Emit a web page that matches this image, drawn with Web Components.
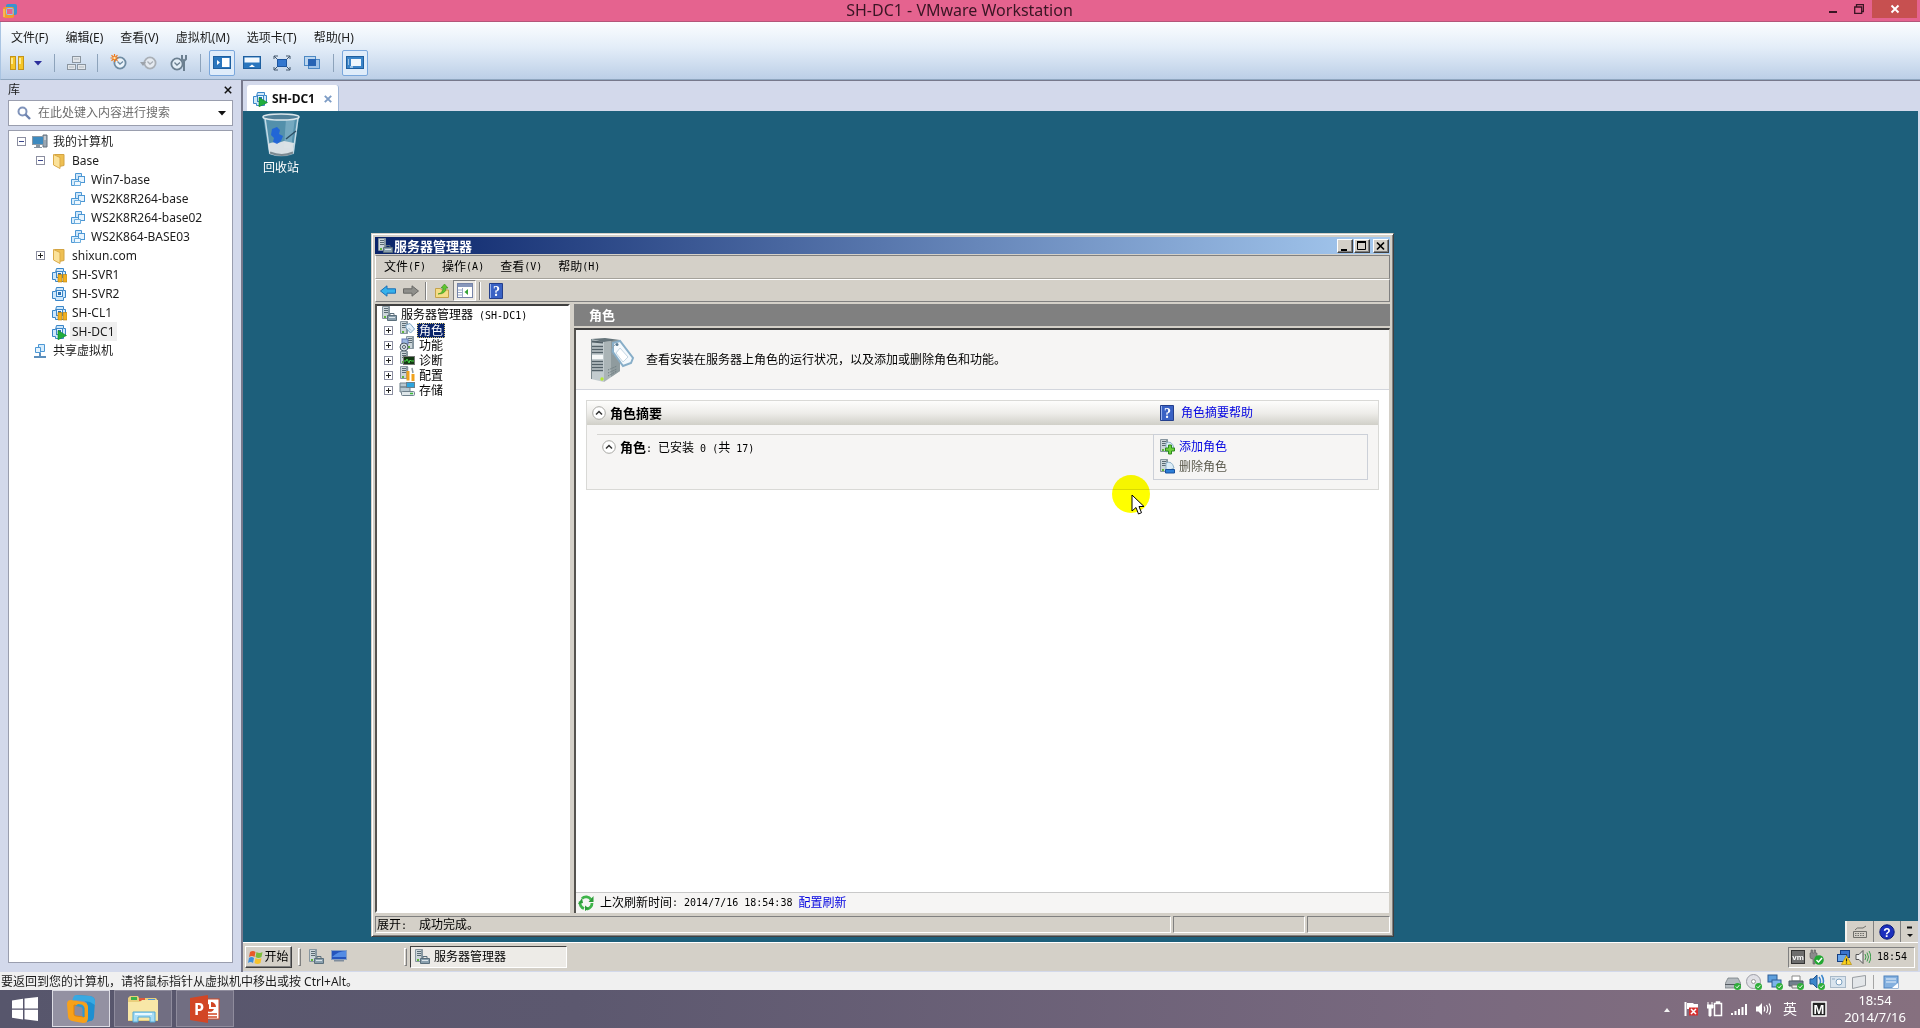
<!DOCTYPE html>
<html lang="zh-CN">
<head>
<meta charset="utf-8">
<title>SH-DC1 - VMware Workstation</title>
<style>
html,body{height:100%;margin:0}
body{font:12px/16px "Noto Sans","Noto Sans CJK SC",sans-serif;color:#1c1c1c;overflow:hidden}
</style>
</head>
<body>
<vm-app></vm-app>
<script>
const BASE = `*{box-sizing:border-box}
button{font:inherit;color:inherit;background:none;border:0;padding:0;margin:0;display:flex;align-items:center;justify-content:center;white-space:nowrap}
a{text-decoration:none;color:#0000e0}`;

function define(name, css, html, setup) {
  const t = document.createElement('template');
  t.innerHTML = `<style>${BASE}${css}</style>${html}`;
  customElements.define(name, class extends HTMLElement {
    constructor() {
      super();
      this.attachShadow({mode: 'open'}).append(t.content.cloneNode(true));
    }
    connectedCallback() { if (setup) setup(this, this.shadowRoot); }
  });
}

/* ---------- icons ---------- */
const tower = `<path d="M2 0h6l1 1v11l-1 1H2z" fill="#8b9ba3"/><path d="M2 0h5v13H2z" fill="#cdd6da"/><path d="M3 2.500h4M3 4.500h4M3 6.500h4" stroke="#5a6b74"/><path d="M1.500 .5h7v12h-7z" fill="none" stroke="#8796a0"/><path d="M3 10h2v2H3z" fill="#5fb43c"/>`;
const blueBox = `<path d="M5.500 1.500h7v3h2v7h-2v3h-8v-2h-3v-7h3z" fill="#cfe8fb" stroke="#3a86c8"/><rect x="5.500" y="4.500" width="6" height="6" fill="#eaf6ff" stroke="#3a86c8"/><rect x="7.500" y="6.500" width="2" height="2" fill="#3a86c8" stroke="#2a6fb0"/>`;
const okDot = `<circle cx="12.500" cy="12.500" r="3.500" fill="#2fae3a"/><path d="M10.800 12.500l1.300 1.300 2.200-2.600" fill="none" stroke="#fff"/>`;
const clock = (c, f) => `<circle cx="10" cy="9" r="5.600" fill="${f}" stroke="${c}" stroke-width="1.800"/><path d="M7.500 7.500L10 10l3-2.500" fill="none" stroke="${c}" stroke-width="1.300"/>`;
const ICONS = {
  logo:[16,16,`<rect x="4" y="1" width="11" height="11" rx="2" fill="#3b93cf"/><rect x="1" y="4" width="11" height="11" rx="2" fill="#f29a2e"/><rect x="4.500" y="5.500" width="6.500" height="6" rx="1" fill="#e5638f" stroke="#8fc8ec"/><path d="M2 14V6" stroke="#ffd37a"/>`],
  logobig:[30,30,`<path d="M10 1l14 1q5 1 5 5l-1 15q0 5-4 5l-3 1V9z" fill="#1e8fd0"/><path d="M10 1l14 1q5 1 5 5v4l-5-3-14-2-4 2 1-4q1-3 3-3z" fill="#39a9e2"/><path d="M5 6l12 2q5 1 5 5v11q0 5-5 5L6 27q-4-1-4-5L1 10q0-4 4-4z" fill="#f7a11a"/><path d="M8 11l8 1.500q2 .5 2 2V23l-8-1q-2 0-2-2z" fill="#8d8b9e" stroke="#e28309"/><path d="M12 10q4 0 5 1.500 1.500 1 1.500 3V23l-2-.3V15q0-2-2-2l-5-1z" fill="#2a99d6"/>`],
  pause:[16,16,`<rect x="1.500" y="1.500" width="5" height="13" fill="#f5c628" stroke="#c3941a"/><rect x="9.500" y="1.500" width="5" height="13" fill="#f5c628" stroke="#c3941a"/><path d="M3 3v6M11 3v6" stroke="#fdeb92" stroke-width="2"/>`],
  caret:[8,5,`<path d="M0 0h8L4 4.500z" fill="#2b2f9c"/>`],
  net:[20,16,`<g fill="#e2e6ea" stroke="#8b959f"><rect x="6.500" y="1.500" width="8" height="6"/><rect x="1.500" y="9.500" width="8" height="5"/><rect x="11.500" y="9.500" width="8" height="5"/></g><path d="M8 4h5M3 12h5M13 12h5" stroke="#b2bac1"/>`],
  snapnew:[18,18,clock('#6f8ca3','#eaf3fa')+`<path d="M4.500 0v8M.5 4h8M1.500 1.200l6 5.600M7.500 1.200l-6 5.600" stroke="#ef7a1d" stroke-width="1.200"/><circle cx="4.500" cy="4" r="1.200" fill="#ffe9b0"/>`],
  snapback:[18,18,clock('#a9afb6','#e5eaf0')+`<path d="M0 8h6L3 12z" fill="#9da3aa"/>`],
  snapman:[18,18,`<g transform="translate(-3 1)">${clock('#6b7f90','#e3eef7')}</g><path d="M12 1v4l2 2 2-2V1M14 7v10" fill="none" stroke="#6b7f90" stroke-width="2"/>`],
  view1:[18,14,`<rect x=".5" y=".5" width="17" height="12" fill="#2a76be" stroke="#1e5f9f"/><rect x="9" y="2" width="7.500" height="9" fill="#fff"/><path d="M4 4l3 2.500L4 9z" fill="#fff"/>`],
  view2:[18,14,`<rect x=".5" y=".5" width="17" height="12" fill="#2a76be" stroke="#1e5f9f"/><rect x="1.500" y="1.500" width="15" height="5" fill="#f4f9fd"/><path d="M6 11h6L9 8.500z" fill="#fff"/>`],
  full:[18,16,`<path d="M1 4V1h4M13 1h4v3M17 12v3h-4M5 15H1v-3M1 1l3 3M17 1l-3 3M17 15l-3-3M1 15l3-3" fill="none" stroke="#42566c"/><rect x="4.500" y="4.500" width="9" height="7" fill="#3377cf" stroke="#1d559f"/>`],
  unity:[18,16,`<rect x="1.500" y="1.500" width="11" height="9" fill="#bcd6ef" stroke="#4d89c4"/><rect x="5.500" y="4.500" width="11" height="9" fill="#9fc3e8" stroke="#4d89c4"/><rect x="5" y="4" width="8" height="7" fill="#2764b4"/>`],
  console:[18,14,`<rect x=".5" y=".5" width="17" height="12" fill="#3b84c8" stroke="#1e5f9f"/><rect x="5" y="3" width="10" height="7" fill="#f1f7fc"/><path d="M2 4h1M2 6h1M2 8h1M4 11h3" stroke="#fff"/>`],
  search:[14,14,`<circle cx="5.500" cy="5.500" r="4" fill="none" stroke="#7f93ba" stroke-width="2"/><path d="M8.500 8.500L13 13" stroke="#6d82ae" stroke-width="2.400"/>`],
  x:[8,8,`<path d="M.8 .8l6.400 6.400M7.200 .8L.8 7.200" stroke="#111" stroke-width="1.500"/>`],
  xblue:[8,8,`<path d="M.8 .8l6.400 6.400M7.200 .8L.8 7.200" stroke="#7d9cc5" stroke-width="1.900"/>`],
  down:[8,5,`<path d="M0 0h8L4 4.500z" fill="#111"/>`],
  pc:[16,16,`<path d="M11 1h4v12h-4z" fill="#9aa7b3" stroke="#65717d"/><rect x=".5" y="2.500" width="11" height="8" fill="#3d8abf" stroke="#8b99a5"/><path d="M4 11h4v2h2v1H2v-1h2z" fill="#8794a0"/><path d="M12 3h2M12 5h2" stroke="#eee"/>`],
  folder:[14,16,`<path d="M2.500 1.500h9.500v11l-5 1z" fill="#eebf52" stroke="#d3a443"/><path d="M1.500 1.500L8 4.500v11L1.500 12z" fill="#fbe29a" stroke="#dbab49"/>`],
  clone:[14,14,`<path d="M4.500 .5h6v3h3v6h-9z" fill="#cde6fa" stroke="#4c97d4"/><rect x="7.500" y="3.500" width="6" height="6" fill="#e7f4fe" stroke="#4c97d4"/><path d="M.5 6.500h7v6h-7z" fill="#d8edfc" stroke="#4c97d4"/><path d="M3.500 8.500h6v4h-6z" fill="#eef8ff" stroke="#6badde"/>`],
  vm:[16,16,blueBox],
  vmpause:[16,16,blueBox+`<path d="M7 7.500h4V15H7zM12 7.500h4V15h-4z" fill="#f1b01f" stroke="#b9800e" stroke-width=".6"/>`],
  vmrun:[16,16,blueBox+`<path d="M7 6.500l8.500 5L7 15.800z" fill="#1fae3c" stroke="#12852a" stroke-width=".6"/>`],
  shared:[14,16,`<path d="M5.500 1.500h6v7h-6z" fill="#d6ecfc" stroke="#4c97d4"/><path d="M2.500 4.500h5v5h-5z" fill="#e6f4fe" stroke="#4c97d4"/><path d="M7 10v3M1 14h12" stroke="#5b8fbd" stroke-width="2"/>`],
  minus:[9,9,`<rect x=".5" y=".5" width="8" height="8" fill="#fff" stroke="#8b8ea0"/><path d="M2 4.500h5" stroke="#39458c"/>`],
  plus:[9,9,`<rect x=".5" y=".5" width="8" height="8" fill="#fff" stroke="#8b8ea0"/><path d="M2 4.500h5M4.500 2v5" stroke="#222"/>`],
  bin:[38,44,`<path d="M1 3h36l-5 38q-13 5-25 0z" fill="#78b0cc" fill-opacity=".6"/><path d="M3 5l5 36M36 5l-5 36" stroke="#c3dbe6" stroke-width="1.500"/><path d="M24 5h9l-4 30h-7z" fill="#a9d0e2" fill-opacity=".4"/><path d="M6 31q5-3 10-1l6-2 10 2-1.500 11q-12 4-23 0z" fill="#dfe5e8" fill-opacity=".95"/><path d="M8 39.500q12 5 23 0" stroke="#7c8a92" fill="none" stroke-width="2"/><path d="M10 16l5-2 3 3-1 4 4 2-2 5-4 3-4-2 1-4-3-3z" fill="#1a5fdd" fill-opacity=".85"/><path d="M24 26l10-8" stroke="#2d4f64" stroke-width="1.500"/><ellipse cx="19" cy="4" rx="18" ry="3" fill="#4f7f98" stroke="#dbe7ec" stroke-width="1.500"/>`],
  server:[16,16,tower+`<path d="M6.500 9.500h9v5h-9z" fill="#8aa0ae" stroke="#5b6f7c"/><path d="M9 9V7.500h4V9" fill="none" stroke="#5b6f7c"/><path d="M8 11.500h6" stroke="#dbe4e9"/>`],
  roles:[16,16,tower+`<path d="M7 4l4-1.500 4.500 5.500-4 4L7 7z" fill="#e4f0f9" stroke="#7ba4c4"/><path d="M9.500 7l2.500 2.500" stroke="#9bb6cb"/>`],
  features:[16,16,`<g transform="translate(6 0)">${tower}</g><rect x="3" y="3" width="6" height="5" fill="#9ab7df" stroke="#667bb8"/><circle cx="5" cy="11" r="4" fill="#d5dfe6" stroke="#4b5b67"/><circle cx="5" cy="11" r="1.500" fill="#fff" stroke="#4b5b67"/>`],
  diag:[16,16,tower+`<rect x="4.500" y="5.500" width="11" height="8" fill="#143a14" stroke="#777"/><path d="M5 10h2l1-2 2 4 1-3 1 1h3" fill="none" stroke="#45d945"/>`],
  config:[16,16,tower+`<path d="M9 5v9.500M14 8v7" stroke="#f0a21c" stroke-width="3"/><path d="M8.500 5V1M14 7l-1-5" stroke="#8a979f" stroke-width="1.500"/>`],
  storage:[16,16,`<path d="M1 2h8v4H1zM1 6h10v5H1z" fill="#b9c8d0" stroke="#70828d"/><rect x="7.500" y="1.500" width="8" height="5" fill="#2fa5dd" stroke="#69808e"/><rect x="2.500" y="10.500" width="13" height="4" rx="1" fill="#dfe7ea" stroke="#6f818c"/><path d="M11 12.500h3" stroke="#3dbb3d" stroke-width="1.500"/>`],
  bigserver:[46,46,`<path d="M15 5l16-2v31L15 45z" fill="#aab4b6"/><path d="M22 4l9-1v31l-9 6z" fill="#8f9b9e"/><path d="M2 2h13v43L2 42z" fill="#c3cccf"/><path d="M2 2l14-1 15 2-16 2z" fill="#66757b"/><path d="M2.500 2v40" stroke="#7b888d"/><path d="M3 9.500h11M3 12.500h11M3 15.500h11M3 24.500h11M3 27.500h11M3 30.500h11M3 33.500h11" stroke="#536168" stroke-width="1.700"/><path d="M3 4.500l11 1" stroke="#536168" stroke-width="2"/><path d="M3 20h11" stroke="#f7f9f9" stroke-width="4"/><path d="M19 33l9-4M19 36l9-4M19 39l9-5" stroke="#68767a" stroke-dasharray="1 1"/><circle cx="13" cy="42" r="1.700" fill="#b5e834"/><path d="M24 6l7-2 13 17-2 5-8 3-10-14z" fill="#f4f9fd" stroke="#88aec8" stroke-width="2"/><path d="M31 11l8 9-5 5-7-9z" fill="#fff" stroke="#c5d6e2"/><circle cx="28" cy="7.500" r="1.500" fill="#5b7c94"/><path d="M27 7q-8 6-3 11" fill="none" stroke="#8fa3b0"/>`],
  back:[16,12,`<path d="M.5 6L7 .8v3h8.500v4.400H7v3z" fill="#35b1ec" stroke="#1c6fb5"/>`],
  fwd:[16,12,`<path d="M15.500 6L9 .8v3H.5v4.400H9v3z" fill="#8f8f8b" stroke="#696966"/>`],
  up:[16,16,`<path d="M1.500 5.500h5l1 1.500h7v7.500h-13z" fill="#f5dd86" stroke="#c5a24a"/><path d="M4 11q5-1 5-6H7l3.500-4L14 5h-2q0 6-8 6z" fill="#5fc52e" stroke="#3b8b1c" stroke-width=".6"/>`],
  panel:[16,15,`<rect x=".5" y=".5" width="15" height="14" fill="#fff" stroke="#7684a8"/><path d="M1 2.500h14" stroke="#8797bb" stroke-width="3"/><path d="M5.500 5v9M1 7h4M1 9.500h4M1 12h4" stroke="#9aa9c6"/><path d="M11 6v6L7.500 9z" fill="#35a335"/>`],
  help:[14,16,`<path d="M.5 .5h13v15H.5z" fill="#3a62c4" stroke="#243f8c"/><path d="M1.500 1v14" stroke="#9bb4ec"/><text x="7.500" y="13" font-family="Liberation Serif" font-weight="bold" font-size="14" text-anchor="middle" fill="#fff">?</text>`],
  collapse:[14,14,`<circle cx="7" cy="7" r="6.300" fill="#fff" stroke="#a8a8a4"/><path d="M4 8.500l3-3 3 3" fill="none" stroke="#333" stroke-width="1.500"/>`],
  addrole:[16,16,tower+`<path d="M7 4q6-3 8 5l-8 4z" fill="#dcecf7" stroke="#8fb2ca"/><path d="M9.500 6h3v3h3v3h-3v3h-3v-3h-3V9h3z" fill="#6ed13c" stroke="#2d8b1c"/>`],
  delrole:[16,16,tower+`<path d="M7 4q6-3 8 5l-8 4z" fill="#dcecf7" stroke="#8fb2ca"/><path d="M6.500 10.500h9v3.500h-9z" fill="#2d7fd8" stroke="#174f9c"/>`],
  refresh:[16,16,`<path d="M13 4.500A6 6 0 0 0 4 3.500M2.200 6.500A6 6 0 0 0 6 13.500M9 14A6 6 0 0 0 14 8" fill="none" stroke="#3eb449" stroke-width="2.800"/><path d="M15.500 1v6h-5zM0 9l5-1-1-5zM7 10.500v5.500l4-2.500z" fill="#2c9c38"/>`],
  winflag:[16,16,`<path d="M2 3q3-2 5.500 0L6.500 8Q4 6 1 8z" fill="#e8592a"/><path d="M8.500 3q3 2 6 0l-1 5q-3 2-6 0z" fill="#7cbc3a"/><path d="M1 9q2.500-2 5 0l-1 5Q2.500 12 0 14z" fill="#3d8fdd"/><path d="M7.500 9q3 2 6 0l-1 5q-3 2-6 0z" fill="#f6c32c"/>`],
  desk:[16,14,`<rect x=".5" y="1.500" width="15" height="9" fill="#2555bd" stroke="#89a0c2"/><path d="M1 8q6-6 14-6v6z" fill="#548ce4"/><path d="M3 11h10v1.500H3z" fill="#7e8c9c"/>`],
  vmtray:[14,14,`<rect x=".5" y=".5" width="13" height="13" fill="#6d6d6d" stroke="#333"/><text x="7" y="10" font-family="Liberation Sans" font-weight="bold" font-size="8" text-anchor="middle" fill="#fff">vm</text>`],
  usbok:[16,16,`<path d="M3 1h1.500v3H6V1h1.500v3H9v4q0 2-2 2v5H5v-5Q2 10 2 8V4h1z" fill="#8b8b8b" stroke="#5c5c5c" stroke-width=".6"/><circle cx="11" cy="11" r="4.800" fill="#23a832"/><path d="M8.500 11l2 2 3.500-4" fill="none" stroke="#fff" stroke-width="1.500"/>`],
  netwarn:[16,16,`<rect x="4.500" y="1.500" width="9" height="7" fill="#3a73cb" stroke="#153f83"/><rect x="1.500" y="5.500" width="9" height="7" fill="#6aa6ea" stroke="#153f83"/><path d="M10.500 6.500l5 9h-10z" fill="#fbd21b" stroke="#ad8300" stroke-width=".6"/><path d="M10.500 9.500v3M10.500 13.500v1" stroke="#222" stroke-width="1.200"/>`],
  sound:[16,16,`<path d="M1 5.500h3l4-4v13l-4-4H1z" fill="#eee" stroke="#555"/><path d="M10 5q2 3 0 6M12 3.500q3 4.500 0 9M14 2q3.500 6 0 12" fill="none" stroke="#3c9d4b"/>`],
  keyb:[16,13,`<path d="M1.500 6.500h13v6h-13zM3 5q2-3 5-2t6-2" fill="none" stroke="#6f6f6b"/><path d="M3 8.500h10M3 10.500h10" stroke="#6f6f6b" stroke-dasharray="1.500 1"/>`],
  helpball:[16,16,`<circle cx="8" cy="8" r="7.200" fill="#1c2fbd" stroke="#0a1a78"/><text x="8" y="12.500" font-family="Liberation Sans" font-weight="bold" font-size="12" text-anchor="middle" fill="#fff">?</text>`],
  lbmore:[6,12,`<path d="M0 1.500h5" stroke="#111" stroke-width="2"/><path d="M0 8h6L3 11z" fill="#111"/>`],
  hdd:[16,16,`<path d="M3 4h10l3 6v4H0v-4z" fill="#b4babf" stroke="#6c7378" stroke-width=".7"/><path d="M0 10.500h16" stroke="#555c62"/>`+okDot],
  cd:[16,16,`<circle cx="7.500" cy="7.500" r="7" fill="#e0e0e6" stroke="#9c9da6"/><circle cx="7.500" cy="7.500" r="2" fill="#fff" stroke="#999"/>`+okDot],
  lan:[16,16,`<rect x="1" y="1" width="9" height="7" fill="#5d9edc" stroke="#2d5d96"/><rect x="5" y="6" width="9" height="7" fill="#7db5e9" stroke="#2d5d96"/>`+okDot],
  printer:[16,16,`<path d="M4 2h8v5H4z" fill="#fff" stroke="#888"/><path d="M1 7h14v5H1z" fill="#71808e" stroke="#4d5a66"/><path d="M4 11h8v3H4z" fill="#eee" stroke="#777"/>`+okDot],
  speakb:[16,16,`<path d="M1 5h3l4-4v13l-4-4H1z" fill="#3c86cc" stroke="#1f5591"/><path d="M10 3q3 4.500 0 9M12.500 1q4 6 0 12" fill="none" stroke="#3c86cc" stroke-width="1.500"/>`+okDot],
  cam:[16,16,`<rect x=".5" y="2.500" width="15" height="11" fill="#d9e4ee" stroke="#a9b9c8"/><circle cx="9" cy="8" r="3" fill="#fff" stroke="#7ba0c0"/><path d="M2 5h3" stroke="#8fa9c0"/>`],
  disp:[16,16,`<path d="M1.500 3.500l13-2v10l-13 3z" fill="#e3e6e9" stroke="#999da2"/>`],
  msg:[16,14,`<rect x="1" y="1" width="14" height="12" fill="#84b0df" stroke="#4f82bd"/><path d="M3 4h10M3 7h10" stroke="#e8f2fc"/><path d="M9 13l6-5v5z" fill="#fff"/>`],
  winlogo:[26,24,`<path d="M0 3.500l11-1.700v9.700H0zM12.500 1.500L26 0v11.500H12.500zM0 12.700h11v9.700L0 20.700zM12.500 12.700H26V24l-13.500-1.700z" fill="#fff"/>`],
  explorer:[32,28,`<path d="M1 3l2-2h8l1 2h17l2 3v20H1z" fill="#e9cf7c"/><path d="M4 2h6v3H4z" fill="#3eae49"/><path d="M12 3h6v3h-6z" fill="#df5a3a"/><path d="M21 4h7v3h-7z" fill="#4e94d4"/><path d="M1 7h12l2-2h16v20H1z" fill="#f8e7a7"/><path d="M6 27V17h22v10h-5v-5H11v5z" fill="#a7dcf5" stroke="#52a9d3"/><path d="M8 19h17" stroke="#e7f8ff" stroke-width="2"/>`],
  ppt:[30,28,`<rect x="14" y="4" width="15" height="20" fill="#fff" stroke="#d24625"/><path d="M19 9a4 4 0 1 0 5 5h-5zM21 7v5h5a5 5 0 0 0-5-5z" fill="#d24625"/><path d="M18 19h9M18 22h9" stroke="#d24625" stroke-width="1.500"/><path d="M0 3l18-3v28L0 25z" fill="#d24625"/><text x="9" y="20" font-family="Open Sans" font-weight="bold" font-size="16" text-anchor="middle" fill="#fff">P</text>`],
  tri:[8,5,`<path d="M1 5h6L4 1z" fill="#f3f3f3"/>`],
  flag:[16,16,`<path d="M2.500 1v14" stroke="#fff" stroke-width="2"/><path d="M4 2h6l1 1h4v6H9L8 8H4z" fill="#fff"/><path d="M6 6.500h9v8H6z" fill="#d8302f"/><path d="M8 8l5 5M13 8l-5 5" stroke="#fff" stroke-width="1.500"/>`],
  batt:[16,16,`<path d="M7.500 2.500h7v12h-7zM9.500 2V1h3v1" fill="none" stroke="#fff" stroke-width="1.500"/><path d="M1 1v3M5 1v3M0 4h6v3H4v8H2V7H0z" stroke="#fff" fill="#fff"/>`],
  bars:[16,14,`<path d="M1 13v-2M4.500 13V9M8 13V7M11.500 13V5M15 13V2" stroke="#fff" stroke-width="2"/>`],
  vol:[16,14,`<path d="M1 4.500h2.500L7 1v12L3.500 9.500H1z" fill="#fff"/><path d="M9 4.500q1.500 2.500 0 5M11.500 3q2.500 4 0 8M14 1.500q3.500 5.500 0 11" fill="none" stroke="#fff" stroke-width="1.200"/>`],
  ime:[16,16,`<rect x="1" y="1" width="14" height="14" fill="#222" stroke="#fff" stroke-width="1.500"/><text x="8" y="13" font-family="Liberation Sans" font-weight="bold" font-size="13" text-anchor="middle" fill="#fff">M</text>`],
  wmin:[10,10,`<path d="M1 8h8" stroke="#3a1524" stroke-width="2"/>`],
  wres:[10,10,`<path d="M2.500 3V.7h7V7.500H8M.7 3h7v6.300h-7z" fill="none" stroke="#3a1524" stroke-width="1.300"/>`],
  wx:[10,10,`<path d="M1.500 1.500l7 7M8.500 1.500l-7 7" stroke="#fff" stroke-width="1.900"/>`],
  gmin:[10,10,`<path d="M1 9h6" stroke="#000" stroke-width="2"/>`],
  gmax:[10,10,`<path d="M.5 1.500h8v7h-8z" fill="none" stroke="#000"/><path d="M0 1h9" stroke="#000" stroke-width="2"/>`],
  gx:[10,10,`<path d="M1 1.500l7 7M8 1.500l-7 7" stroke="#000" stroke-width="1.700"/>`],
  arrow:[14,22,`<path d="M1 1v16l4-3.500L7.500 20l3-1.300L8 12.500h5z" fill="#fff" stroke="#000"/>`]
};
define('ui-icon', `:host{display:inline-flex;flex:none}svg{display:block}`, `<span></span>`, (el, r) => {
  const [w, h, s] = ICONS[el.getAttribute('name')];
  r.querySelector('span').innerHTML = `<svg width="${w}" height="${h}" viewBox="0 0 ${w} ${h}" aria-hidden="true">${s}</svg>`;
});

/* ---------- host application chrome ---------- */
define('vm-titlebar', `:host{display:flex;height:22px;background:#e5638f;border-bottom:1px solid #b4567a;align-items:flex-start;color:#3a1524}
.l,.r{flex:1;display:flex}.l{padding:3px 0 0 2px}.r{justify-content:flex-end;padding-right:3px}
h1{margin:0;font:16px/21px "Noto Sans",sans-serif}
button{width:26px;height:18px}.x{width:45px;background:#c75050}`,
`<div class="l"><ui-icon name="logo"></ui-icon></div><h1>SH-DC1 - VMware Workstation</h1>
<div class="r"><button aria-label="最小化"><ui-icon name="wmin"></ui-icon></button><button aria-label="还原"><ui-icon name="wres"></ui-icon></button><button class="x" aria-label="关闭"><ui-icon name="wx"></ui-icon></button></div>`);

define('vm-menubar', `:host{display:flex;flex-direction:column;height:58px;background:linear-gradient(#fbfdff,#e3edf8 45%,#bccfe7);border-left:1px solid #a9c4e2;border-bottom:1px solid #8fa6bf}
nav{display:flex;gap:17px;padding:4px 0 0 10px;height:28px}
nav button{height:24px}
.bar{display:flex;gap:4px;padding-left:3px;align-items:center}
.bar button{width:26px;height:26px}
.bar .first{margin-right:-4px}.bar .dd{width:16px}
.bar .on{border:1px solid #7aa7dc;border-radius:2px;background:#dfecfa}
i{width:1px;height:18px;margin:0 4px;background:#8da3bb}`,
`<nav><button>文件(F)</button><button>编辑(E)</button><button>查看(V)</button><button>虚拟机(M)</button><button>选项卡(T)</button><button>帮助(H)</button></nav>
<div class="bar"><button class="first" aria-label="挂起"><ui-icon name="pause"></ui-icon></button><button class="dd" aria-label="电源"><ui-icon name="caret"></ui-icon></button><i></i>
<button aria-label="发送"><ui-icon name="net"></ui-icon></button><i></i>
<button aria-label="拍摄快照"><ui-icon name="snapnew"></ui-icon></button><button aria-label="恢复快照"><ui-icon name="snapback"></ui-icon></button><button aria-label="管理快照"><ui-icon name="snapman"></ui-icon></button><i></i>
<button class="on" aria-label="库"><ui-icon name="view1"></ui-icon></button><button aria-label="缩略图"><ui-icon name="view2"></ui-icon></button><button aria-label="全屏"><ui-icon name="full"></ui-icon></button><button aria-label="Unity"><ui-icon name="unity"></ui-icon></button><i></i>
<button class="on" aria-label="控制台"><ui-icon name="console"></ui-icon></button></div>`);

define('tree-row', `:host{display:flex;height:19px;align-items:center;padding-left:calc(8px + var(--depth,0)*19px)}
.t{width:9px;height:9px;margin-right:5px;display:flex}
.ic{width:17px;display:flex;justify-content:center;margin-right:3px}
span.n{padding:0 2px;line-height:19px;white-space:nowrap}:host([selected]) .n{background:#efefef}`,
`<span class="t"></span><span class="ic"></span><span class="n"><slot></slot></span>`, (el, r) => {
  el.style.setProperty('--depth', el.getAttribute('depth') || 0);
  if (el.hasAttribute('toggle')) r.querySelector('.t').innerHTML = `<ui-icon name="${el.getAttribute('toggle')}"></ui-icon>`;
  r.querySelector('.ic').innerHTML = `<ui-icon name="${el.getAttribute('icon')}"></ui-icon>`;
});

define('vm-library', `:host{display:flex;flex-direction:column;width:241px;flex:none;padding:0 8px 9px 8px}
header{display:flex;justify-content:space-between;align-items:center;height:20px;padding-right:1px}
.s{display:flex;align-items:center;height:26px;border:1px solid #9a9eae;background:#fff;padding:0 6px 0 8px;gap:7px}
input{flex:1;min-width:0;border:0;outline:0;padding:0;font:inherit;line-height:18px;background:none}
input::placeholder{color:#6d6d6d;opacity:1}
.tree{flex:1;margin-top:4px;border:1px solid #9a9eae;background:#fff;padding-top:1px}`,
`<header><span>库</span><button aria-label="关闭库"><ui-icon name="x"></ui-icon></button></header>
<div class="s"><ui-icon name="search"></ui-icon><input aria-label="搜索" placeholder="在此处键入内容进行搜索"><button aria-label="筛选"><ui-icon name="down"></ui-icon></button></div>
<div class="tree">
<tree-row toggle="minus" icon="pc">我的计算机</tree-row>
<tree-row depth="1" toggle="minus" icon="folder">Base</tree-row>
<tree-row depth="2" icon="clone">Win7-base</tree-row>
<tree-row depth="2" icon="clone">WS2K8R264-base</tree-row>
<tree-row depth="2" icon="clone">WS2K8R264-base02</tree-row>
<tree-row depth="2" icon="clone">WS2K864-BASE03</tree-row>
<tree-row depth="1" toggle="plus" icon="folder">shixun.com</tree-row>
<tree-row depth="1" icon="vmpause">SH-SVR1</tree-row>
<tree-row depth="1" icon="vm">SH-SVR2</tree-row>
<tree-row depth="1" icon="vmpause">SH-CL1</tree-row>
<tree-row depth="1" icon="vmrun" selected>SH-DC1</tree-row>
<tree-row icon="shared">共享虚拟机</tree-row>
</div>`);

define('vm-tab', `:host{display:flex;align-items:center;gap:4px;height:26px;padding:2px 6px 0 5px;background:#fff;border-right:1px solid #9fb6d8;border-radius:3px 3px 0 0;color:#111}
b{margin-right:5px}`,
`<ui-icon name="vmrun"></ui-icon><b><slot></slot></b><button aria-label="关闭标签"><ui-icon name="xblue"></ui-icon></button>`);

define('vm-status', `:host{display:flex;height:18px;background:#f0f0f0;align-items:center;padding:1px 21px 0 1px}
.t{flex:1;line-height:17px}.i{display:flex;gap:5px;align-items:center}i{width:1px;height:14px;background:#a5a5a5;margin:0 4px 0 1px}`,
`<span class="t">要返回到您的计算机，请将鼠标指针从虚拟机中移出或按 Ctrl+Alt。</span>
<div class="i"><ui-icon name="hdd"></ui-icon><ui-icon name="cd"></ui-icon><ui-icon name="lan"></ui-icon><ui-icon name="printer"></ui-icon><ui-icon name="speakb"></ui-icon><ui-icon name="cam"></ui-icon><ui-icon name="disp"></ui-icon><i></i><ui-icon name="msg"></ui-icon></div>`);

define('host-taskbar', `:host{display:flex;height:38px;flex:none;align-items:stretch;background:linear-gradient(90deg,#57566c,#5c586f 30%,#79697f 75%,#86707f);color:#fff}
.start{width:50px;margin-right:2px}
.app{width:58px;margin:0 4px 1px 0;border:1px solid #8f8c9d;background:#716e82}
.app.on{background:#9391a2;border-color:#dcdce4}
.tray{margin-left:auto;display:flex;align-items:center}
.tray ui-icon{width:24px;justify-content:center}
.lang{width:30px;text-align:center;font-size:14px}
.m{margin:0 0 0 2px}
time{display:block;width:88px;text-align:center;font:13px/17px "Noto Sans",sans-serif;margin-right:1px}`,
`<button class="start" aria-label="开始"><ui-icon name="winlogo"></ui-icon></button>
<button class="app on" aria-label="VMware"><ui-icon name="logobig"></ui-icon></button><button class="app" aria-label="资源管理器"><ui-icon name="explorer"></ui-icon></button><button class="app" aria-label="PowerPoint"><ui-icon name="ppt"></ui-icon></button>
<div class="tray"><ui-icon name="tri"></ui-icon><ui-icon name="flag"></ui-icon><ui-icon name="batt"></ui-icon><ui-icon name="bars"></ui-icon><ui-icon name="vol"></ui-icon><span class="lang">英</span><ui-icon class="m" name="ime"></ui-icon><time>18:54<br>2014/7/16</time></div>`);

/* ---------- guest desktop ---------- */
const LAT = `.a{font:10px/16px "DejaVu Sans Mono",monospace;white-space:pre}`;

define('node-row', `:host{display:flex;height:15px;align-items:center;padding-left:calc(2px + var(--in,0)*1px)}
.n{padding:0 2px;margin-left:2px;line-height:15px;white-space:nowrap}
.p{margin:0 6px 0 5px}.p[hidden]{display:none}
:host([selected]) .n{background:#0a246a;color:#fff;outline:1px dotted #d8c878;outline-offset:-1px}`,
`<ui-icon class="p" name="plus"></ui-icon><span class="ic"></span><span class="n"><slot></slot></span>`, (el, r) => {
  r.querySelector('.p').hidden = el.hasAttribute('root');
  if (el.hasAttribute('root')) el.style.setProperty('--in', 2);
  r.querySelector('.ic').innerHTML = `<ui-icon name="${el.getAttribute('icon')}"></ui-icon>`;
});

define('roles-panel', LAT + `:host{display:flex;flex-direction:column;flex:1;min-width:0}
h2{margin:0;height:22px;background:#808080;color:#fff;font-size:13px;line-height:22px;padding-left:15px}
.c{flex:1;display:flex;flex-direction:column;margin-top:2px;background:#fff;border-left:2px solid #55534f;border-top:2px solid #404040;border-right:1px solid #d4d0c8}
.intro{display:flex;align-items:center;gap:11px;height:60px;padding-left:13px;background:#f6f5f4;border-bottom:1px solid #d3d6dd}
.g{margin:10px 10px 0;border:1px solid #d9d9d6;background:#f6f5f4}
.gh{display:flex;align-items:center;height:24px;padding-left:5px;background:linear-gradient(#fdfdfc,#eeedea 50%,#d0cfc8);gap:4px}
.gh b,.gb b{font-size:13px}
.help{display:flex;align-items:center;gap:7px}
.side{width:215px;flex:none}
.gh .side{width:218px;display:flex}
.gh b,.gb .m{flex:1}
.gb{display:flex;margin:9px 10px 9px;}
.gb .m{border-top:1px solid #d6d5d2;display:flex;align-items:flex-start;padding:4px 0 0 5px;gap:4px}
.gb .m p{margin:0;line-height:16px}
.gb .m ui-icon{margin-top:1px}
.gb .side{border:1px solid #ccd0d8;height:46px;padding:2px 0 0 5px;display:flex;flex-direction:column}
.side a{display:flex;gap:4px;height:20px;align-items:center}.side a.help{gap:7px}.side a.d{color:#59584b}
footer{margin-top:auto;height:21px;border-top:1px solid #c9c9c9;background:#f6f5f4;display:flex;align-items:center;padding-left:2px;gap:6px;white-space:nowrap}
footer p{margin:0;display:flex;align-items:center}`,
`<h2>角色</h2><div class="c">
<div class="intro"><ui-icon name="bigserver"></ui-icon><span>查看安装在服务器上角色的运行状况，以及添加或删除角色和功能。</span></div>
<section class="g"><div class="gh"><ui-icon name="collapse"></ui-icon><b>角色摘要</b><div class="side"><a class="help" href="#help"><ui-icon name="help"></ui-icon>角色摘要帮助</a></div></div>
<div class="gb"><div class="m"><ui-icon name="collapse"></ui-icon><p><b>角色</b><span class="a">: </span>已安装<span class="a"> 0 (</span>共<span class="a"> 17)</span></p></div>
<div class="side"><a href="#add"><ui-icon name="addrole"></ui-icon>添加角色</a><a class="d" href="#remove"><ui-icon name="delrole"></ui-icon>删除角色</a></div></div></section>
<footer><ui-icon name="refresh"></ui-icon><p>上次刷新时间<span class="a">: 2014/7/16 18:54:38</span></p><a href="#refresh">配置刷新</a></footer></div>`);

define('server-manager', LAT + `:host{display:flex;flex-direction:column;background:#d4d0c8;border:1px solid;border-color:#d4d0c8 #404040 #404040 #d4d0c8;box-shadow:inset 1px 1px #fff,inset -1px -1px #808080;padding:3px;color:#000}
.tb{display:flex;align-items:center;height:17px;background:linear-gradient(90deg,#0a246a,#a6caf0);color:#fff;font-weight:bold;font-size:13px;padding:0 1px 0 2px;gap:1px}
.tb span{flex:1}
.w{width:16px;height:14px;background:#d4d0c8;border:1px solid;border-color:#fff #404040 #404040 #fff;box-shadow:inset -1px -1px #808080}
.w.x{margin-left:2px}
nav,.bar{display:flex;align-items:center;border:1px solid;margin-top:1px}
nav{height:24px;gap:16px;padding-left:8px;border-color:#808080 #808080 #a5a29b #fff}
.bar{height:23px;margin-top:0;padding-left:0;border-color:#fff #808080 #808080 #fff}
.bar button{width:23px;height:21px}
.bar i{width:2px;height:18px;border-left:1px solid #808080;border-right:1px solid #fff;margin:0 3px}
.bar .on{border:1px solid;border-color:#808080 #fff #fff #808080;background:#ece9e4}
.body{flex:1;display:flex;gap:4px;margin-top:2px}
.tree{width:195px;flex:none;background:#fff;border:2px solid;border-color:#404040 #fff #fff #55534f;padding-top:2px}
.st{display:flex;gap:2px;height:17px;margin-top:3px}
.st div{border:1px solid;border-color:#808080 #fff #fff #808080;line-height:16px;padding-left:1px;white-space:pre}
.st .p1{flex:1}.st .p2{width:132px}.st .p3{width:83px}`,
`<div class="tb"><ui-icon name="server"></ui-icon><span>服务器管理器</span><button class="w" aria-label="最小化"><ui-icon name="gmin"></ui-icon></button><button class="w" aria-label="最大化"><ui-icon name="gmax"></ui-icon></button><button class="w x" aria-label="关闭"><ui-icon name="gx"></ui-icon></button></div>
<nav><button>文件<span class="a">(F)</span></button><button>操作<span class="a">(A)</span></button><button>查看<span class="a">(V)</span></button><button>帮助<span class="a">(H)</span></button></nav>
<div class="bar"><button aria-label="后退"><ui-icon name="back"></ui-icon></button><button aria-label="前进"><ui-icon name="fwd"></ui-icon></button><i></i><button aria-label="向上"><ui-icon name="up"></ui-icon></button><button class="on" aria-label="显示树"><ui-icon name="panel"></ui-icon></button><i></i><button aria-label="帮助"><ui-icon name="help"></ui-icon></button></div>
<div class="body"><div class="tree">
<node-row root icon="server">服务器管理器<span class="a"> (SH-DC1)</span></node-row>
<node-row icon="roles" selected>角色</node-row><node-row icon="features">功能</node-row><node-row icon="diag">诊断</node-row><node-row icon="config">配置</node-row><node-row icon="storage">存储</node-row>
</div><roles-panel></roles-panel></div>
<div class="st"><div class="p1">展开<span class="a">:  </span>成功完成。</div><div class="p2"></div><div class="p3"></div></div>`);

define('guest-taskbar', LAT + `:host{display:flex;align-items:center;height:29px;flex:none;background:#d4d0c8;border-top:1px solid #fff;padding:0 3px 0 2px;color:#000}
.start{width:47px;height:22px;border:1px solid;border-color:#fff #404040 #404040 #fff;box-shadow:inset -1px -1px #808080;gap:0}
i{width:3px;height:18px;border:1px solid;border-color:#fff #808080 #808080 #fff;margin:0 7px 0 6px}
.q{display:flex;gap:7px;width:90px}
.task{width:157px;height:22px;justify-content:flex-start;gap:4px;padding-left:3px;border:1px solid;border-color:#404040 #fff #fff #404040;background:#edebe7;margin-left:-4px}
.tray{margin-left:auto;display:flex;align-items:center;height:21px;border:1px solid;border-color:#808080 #fff #fff #808080;padding:0 7px 0 2px;gap:3px}
.gap{margin-left:9px}.clock{font:10px/16px "DejaVu Sans Mono",monospace;margin-left:3px}`,
`<button class="start"><ui-icon name="winflag"></ui-icon>开始</button><i></i><div class="q"><ui-icon name="server"></ui-icon><ui-icon name="desk"></ui-icon></div><i></i>
<button class="task"><ui-icon name="server"></ui-icon>服务器管理器</button>
<div class="tray"><ui-icon name="vmtray"></ui-icon><ui-icon name="usbok"></ui-icon><ui-icon class="gap" name="netwarn"></ui-icon><ui-icon name="sound"></ui-icon><span class="clock">18:54</span></div>`);

define('language-bar', `:host{display:flex;height:21px;background:#d4d0c8;border-left:2px solid #f4f2ee;align-items:center}
button{height:21px;width:27px;border-right:1px solid #808080}.m{width:17px;border:0}`,
`<button aria-label="键盘"><ui-icon name="keyb"></ui-icon></button><button aria-label="帮助"><ui-icon name="helpball"></ui-icon></button><button class="m" aria-label="选项"><ui-icon name="lbmore"></ui-icon></button>`);

define('guest-screen', `:host{display:flex;flex-direction:column;flex:1;min-height:0}
.d{flex:1;position:relative;background:#1d5f7b}
.bin{position:absolute;left:8px;top:2px;width:60px;display:flex;flex-direction:column;align-items:center;gap:3px;color:#fff}
server-manager{position:absolute;left:128px;top:122px;width:1023px;height:704px}
language-bar{position:absolute;right:0;bottom:0}
.spot{position:absolute;left:869px;top:364px;width:38px;height:38px;border-radius:50%;background:#ff0;mix-blend-mode:multiply}
.cur{position:absolute;left:888px;top:383px}`,
`<div class="d"><div class="bin"><ui-icon name="bin"></ui-icon><span>回收站</span></div><server-manager></server-manager><language-bar></language-bar><div class="spot"></div><ui-icon class="cur" name="arrow"></ui-icon></div><guest-taskbar></guest-taskbar>`);

define('vm-app', `:host{display:flex;flex-direction:column;height:100vh;background:#d3d9eb}
main{flex:1;display:flex;min-height:0}
.v{flex:1;min-width:0;display:flex;flex-direction:column;border-left:2px solid #77798c;border-top:1px solid #77798c;padding:0 2px 1px 0}
.tabs{display:flex;height:30px;padding:4px 0 0 4px;align-items:flex-end}`,
`<vm-titlebar></vm-titlebar><vm-menubar></vm-menubar><main><vm-library></vm-library><div class="v"><div class="tabs"><vm-tab>SH-DC1</vm-tab></div><guest-screen></guest-screen></div></main><vm-status></vm-status><host-taskbar></host-taskbar>`);
</script>
</body>
</html>
